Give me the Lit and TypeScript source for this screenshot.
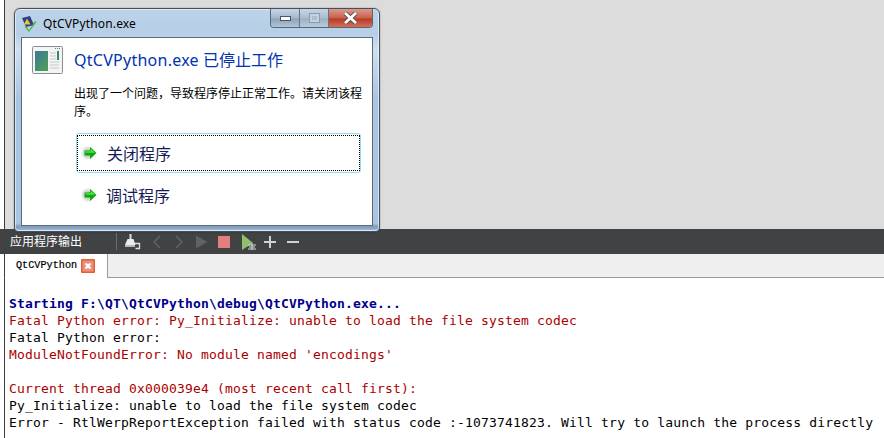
import { LitElement, html, css } from "lit";
import { customElement } from "lit/decorators.js";

const arrow = html`<svg class="arrow" width="18" height="18" viewBox="0 0 18 18">
  <defs><radialGradient id="halo"><stop offset="0" stop-color="#777" stop-opacity=".75"/><stop offset=".7" stop-color="#aaa" stop-opacity=".35"/><stop offset="1" stop-color="#bbb" stop-opacity="0"/></radialGradient></defs>
  <circle cx="7" cy="9" r="7.5" fill="url(#halo)"/>
  <path d="M9 3 15.500 9 9 15V11.500H3.500V6.500H9Z" fill="#0aa80a"/>
  <path d="M9.800 4.800 14 8.800H4.400V7.300H9.800Z" fill="#45e845"/>
</svg>`;

@customElement("app-root")
export class AppRoot extends LitElement {
  static styles = css`
    :host { display: block; position: relative; width: 884px; height: 438px; overflow: hidden; background: #fff;
      font-family: "Noto Sans", "Noto Sans CJK SC", sans-serif; }
    .page { display: grid; grid-template-rows: 229px 25px 24px 1fr; height: 438px; }
    .desk { background: #dcdcdc; border-left: 1px solid #3c3c3c; margin-left: 4px; }
    .bar { background: #404244; color: #fff; display: flex; align-items: center; }
    .bar .label { width: 116px; padding-left: 10px; font-size: 12px; line-height: 25px; box-sizing: border-box; flex: none; white-space: nowrap; }
    .sep { width: 1px; height: 17px; background: #6a6c6e; flex: none; margin-right: 7px; }
    .tools { display: flex; align-items: center; gap: 0; }
    .tools svg { display: block; flex: none; }
    .m9 { margin-left: 9px; }
    .m10 { margin-left: 10px; }
    .m12 { margin-left: 12px; }
    .m6 { margin-left: 6px; }
    .tabs { background: #efefef; border-bottom: 1px solid #9a9a9a; box-sizing: border-box; margin-left: 4px; border-left: 1px solid #3c3c3c; display: flex; }
    .tab { width: 103px; height: 24px; box-sizing: border-box; background: #fff; border-right: 1px solid #9a9a9a; display: flex; align-items: center; padding-left: 11px; gap: 4px;
      font: 10.2px/1 "Liberation Mono", monospace; -webkit-text-stroke: 0.2px #000; color: #000; }
    .closebox { width: 14px; height: 14px; flex: none; display: block; }
    .out { margin-left: 4px; border-left: 1px solid #3c3c3c; padding: 17px 0 0 4px; font: 13px/17px "DejaVu Sans Mono", monospace; letter-spacing: 0.175px; white-space: pre; }
    .l { height: 17px; color: #000; }
    .r { color: #aa0000; }
    .b { color: #00008b; font-weight: bold; }

    .win { position: absolute; left: 14px; top: 8px; width: 366px; height: 224px; box-sizing: border-box; border: 1px solid #45505c; border-radius: 6px 6px 4px 4px;
      background: linear-gradient(180deg, #bcd2e8 0, #b6cfe7 25px, #cfe0f0 40px, #a9c5e4 90px, #a9c5e4 214px, #7f9ab8 218px, #a9c5e4 222px); box-shadow: inset 0 0 0 1px rgba(255,255,255,.55), 0 0 2px rgba(0,0,0,.3); }
    .tb { position: absolute; left: 6px; top: 5px; display: flex; align-items: center; gap: 5px; font-size: 12px; letter-spacing: 0.15px; line-height: 20px; color: #000; }
    .ctl { position: absolute; right: 6px; top: 0; height: 19px; width: 103px; display: flex; border: 1px solid #5a6673; border-top: none; border-radius: 0 0 4px 4px; overflow: hidden; box-sizing: border-box; }
    .ctl div { display: flex; align-items: center; justify-content: center; }
    .c1 { width: 28px; background: linear-gradient(#c6d6e6, #a3b7cb 50%, #8ea3b8 55%, #b0c4d8); border-right: 1px solid #66727f; }
    .c2 { width: 28px; background: linear-gradient(#c6d6e6, #a9bdd1 50%, #9cb0c4 55%, #b8cce0); border-right: 1px solid #66727f; }
    .c3 { flex: 1; background: linear-gradient(#d99a8c, #c9604d 50%, #b93a22 55%, #d2705c); }
    .pane { position: absolute; left: 6px; top: 28px; width: 352px; height: 189px; box-sizing: border-box; background: #fff; border: 1px solid #5c6a78; display: flex; flex-direction: column; padding: 0 12px 0 10px; }
    .head { display: flex; align-items: center; gap: 10px; margin-top: 6px; }
    .h { font-size: 16px; line-height: 24px; color: #0033b0; white-space: nowrap; }
    .lat { letter-spacing: 0.26px; }
    .msg { margin: 9px 0 0 42px; width: 290px; font-size: 12px; line-height: 18px; color: #000; }
    .btn { margin-left: 44px; box-sizing: border-box; display: flex; align-items: center; gap: 7px; font-size: 16px; color: #151c55; }
    .btn.first { margin-top: 12px; width: 285px; height: 40px; border: 1px solid #8fdcf5; border-radius: 3px; padding: 1px 0; }
    .focus { flex: 1; height: 100%; border: 1px dotted #000; box-sizing: border-box; display: flex; align-items: center; gap: 8px; padding-left: 3px; }
    .btn.second { margin-top: 2px; height: 39px; padding-left: 5px; }
    .arrow { flex: none; display: block; }
  `;

  render() {
    return html`
      <div class="page">
        <div class="desk"></div>
        <div class="bar">
          <div class="label">应用程序输出</div>
          <div class="sep"></div>
          <div class="tools">
            <svg width="18" height="18" viewBox="0 0 18 18"><path d="M5.500 1h2v5h-2Z" fill="#ddd"/><path d="M3.500 6h6l2 6H1Z" fill="#ececec"/><path d="M1 12h10v2H1Z" fill="#bbb"/><path d="M10.500 10.500h5v5h-4" fill="none" stroke="#e0e0e0" stroke-width="1.300"/></svg>
            <svg class="m9" width="12" height="18" viewBox="0 0 12 18"><path d="M9 3 3 9l6 6" fill="none" stroke="#5f6163" stroke-width="1.600"/></svg>
            <svg class="m10" width="12" height="18" viewBox="0 0 12 18"><path d="m3 3 6 6-6 6" fill="none" stroke="#5f6163" stroke-width="1.600"/></svg>
            <svg class="m10" width="14" height="18" viewBox="0 0 14 18"><path d="M1 2.500 12.500 9 1 15.500Z" fill="#5f6163"/></svg>
            <svg class="m9" width="12" height="12" viewBox="0 0 12 12"><path d="M0 0h12v12H0Z" fill="#e57f7f"/></svg>
            <svg class="m12" width="15" height="18" viewBox="0 0 15 18"><path d="M0 1 11 10 0 17Z" fill="#8fbf6f"/><path d="M6 12h8M7 14h6M6 16h8M10 10v7" stroke="#d8d8d8" stroke-width="1"/></svg>
            <svg class="m6" width="14" height="14" viewBox="0 0 14 14"><path d="M7 1v12M1 7h12" stroke="#d2d2d2" stroke-width="2"/></svg>
            <svg class="m10" width="12" height="14" viewBox="0 0 12 14"><path d="M0 7h12" stroke="#d2d2d2" stroke-width="2"/></svg>
          </div>
        </div>
        <div class="tabs">
          <div class="tab">QtCVPython
            <svg class="closebox" viewBox="0 0 14 14"><rect width="14" height="14" rx="1" fill="#e0603a"/><rect x="1.500" y="1.500" width="11" height="11" fill="#ea9078"/><path d="m4.500 4.500 5 5m0-5-5 5" stroke="#fff" stroke-width="2.200"/></svg>
          </div>
        </div>
        <div class="out"><div class="l b">Starting F:\\QT\\QtCVPython\\debug\\QtCVPython.exe...</div><div class="l r">Fatal Python error: Py_Initialize: unable to load the file system codec</div><div class="l">Fatal Python error:</div><div class="l r">ModuleNotFoundError: No module named 'encodings'</div><div class="l"></div><div class="l r">Current thread 0x000039e4 (most recent call first):</div><div class="l">Py_Initialize: unable to load the file system codec</div><div class="l">Error - RtlWerpReportException failed with status code :-1073741823. Will try to launch the process directly</div></div>
      </div>

      <div class="win">
        <div class="tb">
          <svg width="17" height="18" viewBox="0 0 17 18"><path d="M1 3 9 1l4 9-8 2Z" fill="#2a3d8c"/><path d="M6 3.500 9.500 9.500H3Z" fill="#f2c81e"/><path d="m5 11 3 4 6-9 1.500 1L8 17 3.500 12Z" fill="#55b83c"/></svg>
          <span>QtCVPython.exe</span>
        </div>
        <div class="ctl">
          <div class="c1"><svg width="11" height="5" viewBox="0 0 11 5"><rect x=".5" y=".5" width="10" height="4" fill="#fff" stroke="#4a5664"/></svg></div>
          <div class="c2"><svg width="11" height="10" viewBox="0 0 11 10"><rect x=".5" y=".5" width="10" height="9" fill="#c3d2e0" stroke="#8a9cae"/><rect x="3" y="3" width="5" height="4" fill="#aebfd0"/></svg></div>
          <div class="c3"><svg width="15" height="12" viewBox="0 0 15 12"><path d="m2 1 11 10m0-10L2 11" stroke="#4a4a4a" stroke-width="4.400"/><path d="m2 1 11 10m0-10L2 11" stroke="#fff" stroke-width="2.800"/></svg></div>
        </div>
        <div class="pane">
          <div class="head">
            <svg width="32" height="32" viewBox="0 0 32 32"><defs><linearGradient id="sc" x1="0" y1="0" x2=".7" y2="1"><stop offset="0" stop-color="#3a7a9a"/><stop offset="1" stop-color="#4f9a5c"/></linearGradient></defs><rect x=".5" y="2.500" width="30" height="27" rx="1" fill="#f4f4f4" stroke="#8a8e90"/><rect x="3" y="7" width="13" height="20" fill="url(#sc)"/><path d="M18 9h6M18 12h6M18 15h6M18 18h9M18 21h9M18 24h9" stroke="#c4c8ca"/><rect x="25" y="7" width="2" height="9" fill="#2f8a6a"/><path d="M23 4.500h6" stroke="#777" stroke-dasharray="1 1"/></svg>
            <div class="h"><span class="lat">QtCVPython.exe</span> 已停止工作</div>
          </div>
          <div class="msg">出现了一个问题，导致程序停止正常工作。请关闭该程序。</div>
          <div class="btn first"><div class="focus">${arrow}<span>关闭程序</span></div></div>
          <div class="btn second">${arrow}<span>调试程序</span></div>
        </div>
      </div>
    `;
  }
}
